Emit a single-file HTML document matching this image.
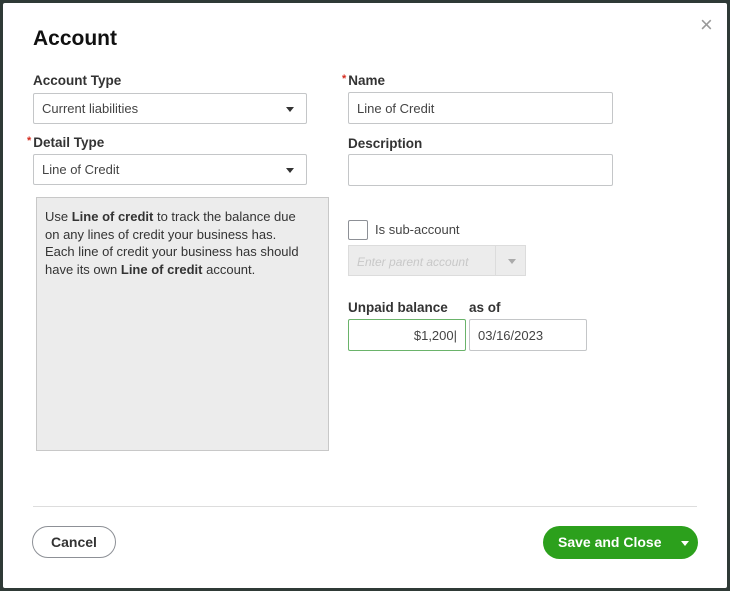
<!DOCTYPE html>
<html><head><style>
*{box-sizing:border-box;margin:0;padding:0}
body{width:730px;height:591px;background:#2f3a36;font-family:"Liberation Sans",sans-serif;position:relative;overflow:hidden}
.m{position:absolute;left:3px;top:3px;width:724px;height:585px;background:#fff;border-radius:2px}
.a{position:absolute}
h1{position:absolute;left:30px;top:24px;font-size:21px;font-weight:bold;color:#111}
.lbl{position:absolute;font-size:13.5px;font-weight:bold;color:#333}
.req{color:#d52b1e;font-size:11px;vertical-align:top;margin-right:2px}
.in{position:absolute;border:1px solid #c4c6c8;border-radius:2px;font-size:13px;color:#444;padding-left:8px;display:flex;align-items:center;background:#fff}
.tri{position:absolute;right:12px;top:50%;margin-top:-2px;width:0;height:0;border-left:4px solid transparent;border-right:4px solid transparent;border-top:5px solid #333}
</style></head><body>
<div class="m">
<div class="a" style="left:697px;top:9px;font-size:22px;color:#999">×</div>
<h1>Account</h1>
<div class="lbl" style="left:30px;top:70px">Account Type</div>
<div class="in" style="left:30px;top:90px;width:274px;height:31px">Current liabilities<span class="tri"></span></div>
<div class="lbl" style="left:24px;top:132px"><span class="req">*</span>Detail Type</div>
<div class="in" style="left:30px;top:151px;width:274px;height:31px">Line of Credit<span class="tri"></span></div>
<div class="a" style="left:33px;top:194px;width:293px;height:254px;background:#ececec;border:1px solid #c8c8c8;padding:10px 8px;font-size:13px;line-height:17.5px;color:#333;white-space:nowrap">Use <b>Line of credit</b> to track the balance due<br>on any lines of credit your business has.<br>Each line of credit your business has should<br>have its own <b>Line of credit</b> account.</div>
<div class="lbl" style="left:339px;top:70px"><span class="req">*</span>Name</div>
<div class="in" style="left:345px;top:89px;width:265px;height:32px">Line of Credit</div>
<div class="lbl" style="left:345px;top:133px">Description</div>
<div class="in" style="left:345px;top:151px;width:265px;height:32px"></div>
<div class="a" style="left:345px;top:217px;width:20px;height:20px;border:1px solid #8d9096;border-radius:2px"></div>
<div class="a" style="left:372px;top:219px;font-size:13px;color:#444">Is sub-account</div>
<div class="a" style="left:345px;top:242px;width:178px;height:31px;background:#ececec;border:1px solid #dcdcdc;font-size:12px;color:#c8c8c8;font-style:italic;padding:9px 0 0 8px">Enter parent account<div class="a" style="left:146px;top:0;width:1px;height:29px;background:#dcdcdc"></div><span class="tri" style="border-top-color:#aaa;right:9px"></span></div>
<div class="lbl" style="left:345px;top:297px">Unpaid balance</div>
<div class="lbl" style="left:466px;top:297px">as of</div>
<div class="in" style="left:345px;top:316px;width:118px;height:32px;border-color:#6ab36a;justify-content:flex-end;padding-right:8px">$1,200|</div>
<div class="in" style="left:466px;top:316px;width:118px;height:32px">03/16/2023</div>
<div class="a" style="left:30px;top:503px;width:664px;height:1px;background:#ddd"></div>
<div class="a" style="left:29px;top:523px;width:84px;height:32px;border:1px solid #8d9096;border-radius:16px;font-size:14px;font-weight:bold;color:#333;text-align:center;line-height:30px">Cancel</div>
<div class="a" style="left:540px;top:523px;width:155px;height:33px;background:#2ca01c;border-radius:17px;color:#fff;font-size:14px;font-weight:bold;line-height:33px;padding-left:15px">Save and Close<span class="tri" style="border-top-color:#fff;right:9px"></span></div>
</div>
</body></html>
